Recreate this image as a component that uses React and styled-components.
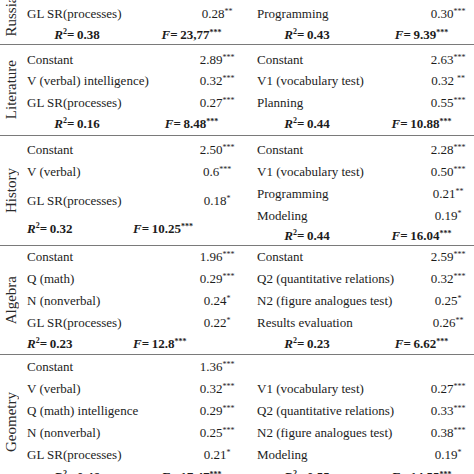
import React from "react";
import styled, { createGlobalStyle } from "styled-components";

const GlobalStyle = createGlobalStyle`
  html, body {
    margin: 0;
    padding: 0;
    background: #fff;
    overflow: hidden;
  }
  body {
    font-family: "Liberation Serif", "Times New Roman", serif;
    color: #1c1c1c;
  }
`;

const Page = styled.div`
  width: 474px;
  height: 474px;
  overflow: hidden;
  background: #fff;
`;

const Table = styled.div`
  display: flex;
  flex-direction: column;
  margin-top: -19px; /* the table is cropped at the top */
`;

const Section = styled.section`
  display: flex;
  border-top: ${(p) => (p.first ? "none" : "1px solid #7a7a7a")};
`;

const SideLabel = styled.div`
  width: 22px;
  flex: none;
  display: flex;
  align-items: center;
  justify-content: center;
  font-size: 15px;
  color: #2a2a2a;

  span {
    writing-mode: vertical-rl;
    transform: rotate(180deg);
    white-space: nowrap;
  }
`;

const Panel = styled.div`
  flex: none;
  width: ${(p) => p.w}px;
  box-sizing: border-box;
  padding: ${(p) => p.pad || 0}px ${(p) => p.pr || 0}px 0 ${(p) => p.pl}px;
  display: flex;
  flex-direction: column;
`;

const Row = styled.div`
  display: flex;
  align-items: center;
  height: ${(p) => p.h || 22}px;
  font-size: 13px;
  white-space: nowrap;
`;

const Name = styled.span`
  flex: 1;
`;

const Value = styled.span`
  width: 46px;
  text-align: center;
`;

const Stars = styled.sup`
  font-size: 8px;
  line-height: 0;
  vertical-align: 4px;
  margin-left: ${(p) => (p.gap ? 3 : 0)}px;
`;

const StatRow = styled.div`
  display: grid;
  grid-template-columns: 100px 97px;
  column-gap: ${(p) => (p.flush ? 6 : 16)}px;
  justify-items: ${(p) => (p.flush ? "start" : "center")};
  align-items: center;
  height: ${(p) => p.h || 22}px;
  font-size: 13px;
  font-weight: 700;
  white-space: nowrap;

  i {
    font-style: italic;
  }
  sup.sq {
    font-size: 8px;
    line-height: 0;
    vertical-align: 5px;
  }
`;

const sections = [
  {
    name: "Russian",
    first: true,
    pad: 0,
    left: {
      rows: [
        ["Constant", "1.84", "***"],
        ["GL SR(processes)", "0.28", "**"],
      ],
      stat: { r: "0.38", f: "23,77", h: 19 },
    },
    right: {
      rows: [
        ["Constant", "2.12", "***"],
        ["Programming", "0.30", "***"],
      ],
      stat: { r: "0.43", f: "9.39", h: 19 },
    },
  },
  {
    name: "Literature",
    pad: 4,
    left: {
      rows: [
        ["Constant", "2.89", "***", 21.5],
        ["V (verbal) intelligence)", "0.32", "***", 21.5],
        ["GL SR(processes)", "0.27", "***", 21.5],
      ],
      stat: { r: "0.16", f: "8.48", h: 21.5 },
    },
    right: {
      rows: [
        ["Constant", "2.63", "***", 21.5],
        ["V1 (vocabulary test)", "0.32", "**", 21.5, true],
        ["Planning", "0.55", "***", 21.5],
      ],
      stat: { r: "0.44", f: "10.88", h: 21.5 },
    },
  },
  {
    name: "History",
    pad: 3,
    left: {
      rows: [
        ["Constant", "2.50", "***"],
        ["V (verbal)", "0.6", "***"],
        ["GL SR(processes)", "0.18", "*", 35],
      ],
      stat: { r: "0.32", f: "10.25", flush: true },
    },
    right: {
      rows: [
        ["Constant", "2.28", "***"],
        ["V1 (vocabulary test)", "0.50", "***"],
        ["Programming", "0.21", "**"],
        ["Modeling", "0.19", "*", 21],
      ],
      stat: { r: "0.44", f: "16.04", h: 19 },
    },
  },
  {
    name: "Algebra",
    pad: 0,
    left: {
      rows: [
        ["Constant", "1.96", "***"],
        ["Q (math)", "0.29", "***"],
        ["N (nonverbal)", "0.24", "*"],
        ["GL SR(processes)", "0.22", "*"],
      ],
      stat: { r: "0.23", f: "12.8", flush: true, h: 20 },
    },
    right: {
      rows: [
        ["Constant", "2.59", "***"],
        ["Q2 (quantitative relations)", "0.32", "***"],
        ["N2 (figure analogues test)", "0.25", "*"],
        ["Results evaluation", "0.26", "**"],
      ],
      stat: { r: "0.23", f: "6.62", h: 20 },
    },
  },
  {
    name: "Geometry",
    pad: 1,
    left: {
      rows: [
        ["Constant", "1.36", "***"],
        ["V (verbal)", "0.32", "***"],
        ["Q (math) intelligence", "0.29", "***"],
        ["N (nonverbal)", "0.25", "***"],
        ["GL SR(processes)", "0.21", "*"],
      ],
      stat: { r: "0.46", f: "17.47" },
    },
    right: {
      rows: [
        ["", "", ""],
        ["V1 (vocabulary test)", "0.27", "***"],
        ["Q2 (quantitative relations)", "0.33", "***"],
        ["N2 (figure analogues test)", "0.38", "***"],
        ["Modeling", "0.19", "*"],
      ],
      stat: { r: "0.55", f: "14.55" },
    },
  },
];

const Column = ({ data, ...rest }) => (
  <Panel {...rest}>
    {data.rows.map(([label, value, stars, h, gap], i) => (
      <Row key={i} h={h}>
        <Name>{label}</Name>
        <Value>
          {value}
          {stars && <Stars gap={gap}>{stars}</Stars>}
        </Value>
      </Row>
    ))}
    <StatRow flush={data.stat.flush} h={data.stat.h}>
      <span>
        <i>R</i>
        <sup className="sq">2</sup>=&thinsp;{data.stat.r}
      </span>
      <span>
        <i>F</i>=&thinsp;{data.stat.f}
        <Stars>***</Stars>
      </span>
    </StatRow>
  </Panel>
);

const App = () => (
  <Page>
    <GlobalStyle />
    <Table>
      {sections.map((s) => (
        <Section key={s.name} first={s.first}>
          <SideLabel>
            <span>{s.name}</span>
          </SideLabel>
          <Column data={s.left} w={218} pl={5} pad={s.pad} />
          <Column data={s.right} w={234} pl={17} pr={3} pad={s.pad} />
        </Section>
      ))}
    </Table>
  </Page>
);

export default App;
